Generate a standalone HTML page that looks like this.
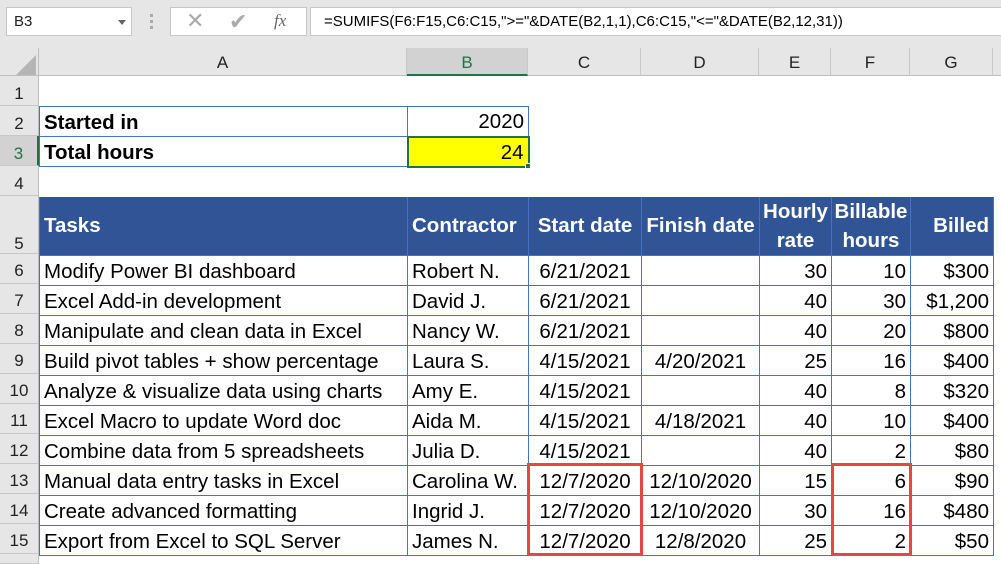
<!DOCTYPE html>
<html><head><style>
*{margin:0;padding:0;box-sizing:border-box}
body{width:1001px;height:559px;background:#e6e6e6;position:relative;overflow:hidden;font-family:"Liberation Sans",Arial,sans-serif}
.a{position:absolute}
.box{position:absolute;background:#fff;border:1px solid #c6c6c6}
table{position:absolute;left:39px;top:76px;width:974px;border-collapse:collapse;table-layout:fixed;background:#fff}
td{border:1px solid #fff;height:30px;font-size:20.5px;padding:2px 4px 0;white-space:nowrap;overflow:hidden;color:#000;line-height:22px}
td.b{border:1px solid #4472c4}
td.bb{border-bottom:1px solid #4472c4}
td.r{text-align:right}
td.c{text-align:center}
td.n{border:none}
tr.h td{background:#305496;color:#fff;font-weight:bold;border:1px solid #4472c4;height:58px;padding-top:0}
.rh{position:absolute;left:0;width:39px;background:#e6e6e6;border-bottom:1px solid #c8c8c8;border-right:1px solid #bdbdbd;font-size:17px;color:#222;text-align:center}
.ch{position:absolute;top:48px;height:28px;border-right:1px solid #c8c8c8;border-bottom:1px solid #bdbdbd;font-size:17px;color:#222;text-align:center;line-height:30px;background:#e6e6e6}
.red{position:absolute;border:3px solid #e84545}
</style></head><body>
<div class="box" style="left:6px;top:7px;width:126px;height:29px;font-size:15px;line-height:27px;padding-left:7px;color:#222">B3<span style="position:absolute;left:111px;top:12px;border:4px solid transparent;border-top:5px solid #666"></span></div>
<div class="a" style="left:150px;top:14px;width:3px;height:3px;background:#aaa;box-shadow:0 6px #aaa,0 12px #aaa"></div>
<div class="box" style="left:170px;top:7px;width:137px;height:29px">
<span class="a" style="left:15px;top:0;font-size:22px;color:#aaa;line-height:26px">✕</span>
<span class="a" style="left:58px;top:0;font-size:22px;color:#aaa;line-height:27px">✔</span>
<span class="a" style="left:103px;top:2px;font-size:17px;color:#666;font-style:italic;font-family:'Liberation Serif',serif;line-height:22px">fx</span></div>
<div class="box" style="left:310px;top:7px;width:700px;height:29px;font-size:15px;line-height:27px;padding-left:13px;color:#000">=SUMIFS(F6:F15,C6:C15,"&gt;="&amp;DATE(B2,1,1),C6:C15,"&lt;="&amp;DATE(B2,12,31))</div>
<div class="a" style="left:0;top:48px;width:39px;height:28px;border-right:1px solid #bdbdbd;border-bottom:1px solid #bdbdbd"><div class="a" style="left:16px;top:7px;width:0;height:0;border-left:20px solid transparent;border-bottom:20px solid #b5b5b5"></div></div>
<div class="ch" style="left:39px;width:368px">A</div>
<div class="ch" style="left:407px;width:121px;background:#d2d2d2;color:#217346;border-bottom:2px solid #217346">B</div>
<div class="ch" style="left:528px;width:113px">C</div>
<div class="ch" style="left:641px;width:118px">D</div>
<div class="ch" style="left:759px;width:72px">E</div>
<div class="ch" style="left:831px;width:79px">F</div>
<div class="ch" style="left:910px;width:83px">G</div>
<div class="ch" style="left:993px;width:20px;border-right:none"></div>
<div class="rh" style="top:76px;height:30px;line-height:36px">1</div>
<div class="rh" style="top:106px;height:30px;line-height:36px">2</div>
<div class="rh" style="top:136px;height:30px;line-height:36px;background:#d2d2d2;color:#217346;border-right:2px solid #217346">3</div>
<div class="rh" style="top:166px;height:30px;line-height:36px">4</div>
<div class="rh" style="top:196px;height:58px;line-height:96px">5</div>
<div class="rh" style="top:254px;height:30px;line-height:34px">6</div>
<div class="rh" style="top:284px;height:30px;line-height:34px">7</div>
<div class="rh" style="top:314px;height:30px;line-height:34px">8</div>
<div class="rh" style="top:344px;height:30px;line-height:34px">9</div>
<div class="rh" style="top:374px;height:30px;line-height:34px">10</div>
<div class="rh" style="top:404px;height:30px;line-height:34px">11</div>
<div class="rh" style="top:434px;height:30px;line-height:34px">12</div>
<div class="rh" style="top:464px;height:30px;line-height:34px">13</div>
<div class="rh" style="top:494px;height:30px;line-height:34px">14</div>
<div class="rh" style="top:524px;height:30px;line-height:34px">15</div>
<div class="rh" style="top:554px;height:10px"></div>
<div class="a" style="left:39px;top:554px;width:970px;height:10px;background:#fff"></div>
<table>
<colgroup><col style="width:368px"><col style="width:121px"><col style="width:113px"><col style="width:118px"><col style="width:72px"><col style="width:79px"><col style="width:83px"><col style="width:20px"></colgroup>
<tr><td class="bb"></td><td class="bb"></td><td></td><td></td><td></td><td></td><td></td><td class="n"></td></tr>
<tr><td class="b" style="font-weight:bold">Started in</td><td class="b r">2020</td><td></td><td></td><td></td><td></td><td></td><td class="n"></td></tr>
<tr><td class="b" style="font-weight:bold">Total hours</td><td class="r" style="background:#ffff00;border:2px solid #217346">24</td><td></td><td></td><td></td><td></td><td></td><td class="n"></td></tr>
<tr><td></td><td></td><td></td><td></td><td></td><td></td><td></td><td class="n"></td></tr>
<tr class="h"><td>Tasks</td><td>Contractor</td><td class="c">Start date</td><td class="c">Finish date</td><td class="c" style="line-height:29px;padding:0">Hourly<br>rate</td><td class="c" style="line-height:29px;padding:0">Billable<br>hours</td><td class="r">Billed</td><td style="background:#fff;border:none"></td></tr>
<tr><td class="b">Modify Power BI dashboard</td><td class="b">Robert N.</td><td class="b c">6/21/2021</td><td class="b c"></td><td class="b r">30</td><td class="b r">10</td><td class="b r">$300</td><td class="n"></td></tr>
<tr><td class="b">Excel Add-in development</td><td class="b">David J.</td><td class="b c">6/21/2021</td><td class="b c"></td><td class="b r">40</td><td class="b r">30</td><td class="b r">$1,200</td><td class="n"></td></tr>
<tr><td class="b">Manipulate and clean data in Excel</td><td class="b">Nancy W.</td><td class="b c">6/21/2021</td><td class="b c"></td><td class="b r">40</td><td class="b r">20</td><td class="b r">$800</td><td class="n"></td></tr>
<tr><td class="b">Build pivot tables + show percentage</td><td class="b">Laura S.</td><td class="b c">4/15/2021</td><td class="b c">4/20/2021</td><td class="b r">25</td><td class="b r">16</td><td class="b r">$400</td><td class="n"></td></tr>
<tr><td class="b">Analyze &amp; visualize data using charts</td><td class="b">Amy E.</td><td class="b c">4/15/2021</td><td class="b c"></td><td class="b r">40</td><td class="b r">8</td><td class="b r">$320</td><td class="n"></td></tr>
<tr><td class="b">Excel Macro to update Word doc</td><td class="b">Aida M.</td><td class="b c">4/15/2021</td><td class="b c">4/18/2021</td><td class="b r">40</td><td class="b r">10</td><td class="b r">$400</td><td class="n"></td></tr>
<tr><td class="b">Combine data from 5 spreadsheets</td><td class="b">Julia D.</td><td class="b c">4/15/2021</td><td class="b c"></td><td class="b r">40</td><td class="b r">2</td><td class="b r">$80</td><td class="n"></td></tr>
<tr><td class="b">Manual data entry tasks in Excel</td><td class="b">Carolina W.</td><td class="b c">12/7/2020</td><td class="b c">12/10/2020</td><td class="b r">15</td><td class="b r">6</td><td class="b r">$90</td><td class="n"></td></tr>
<tr><td class="b">Create advanced formatting</td><td class="b">Ingrid J.</td><td class="b c">12/7/2020</td><td class="b c">12/10/2020</td><td class="b r">30</td><td class="b r">16</td><td class="b r">$480</td><td class="n"></td></tr>
<tr><td class="b">Export from Excel to SQL Server</td><td class="b">James N.</td><td class="b c">12/7/2020</td><td class="b c">12/8/2020</td><td class="b r">25</td><td class="b r">2</td><td class="b r">$50</td><td class="n"></td></tr>
</table>
<div class="a" style="left:525px;top:163px;width:6px;height:6px;background:#217346;border:1px solid #fff"></div>
<div class="red" style="left:527px;top:463px;width:116px;height:93px"></div>
<div class="red" style="left:831px;top:463px;width:81px;height:93px"></div>
</body></html>
